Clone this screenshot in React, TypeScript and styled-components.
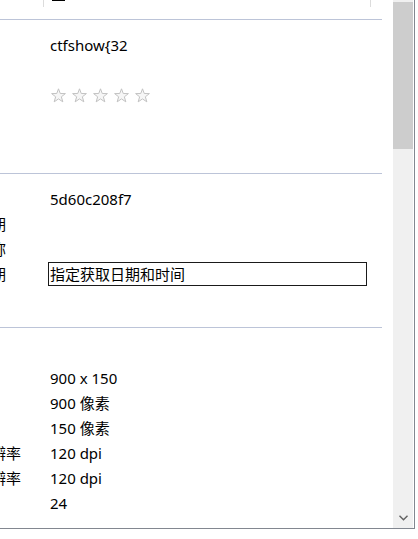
import React from "react";
import styled, { createGlobalStyle } from "styled-components";

const Global = createGlobalStyle`
  html, body { margin: 0; padding: 0; background: #ffffff; overflow: hidden; }
  body { font-family: "Noto Sans", "Noto Sans CJK SC", sans-serif; }
`;

const Page = styled.div`
  width: 418px;
  height: 539px;
  background: #ffffff;
`;

const Frame = styled.div`
  box-sizing: border-box;
  width: 415px;
  height: 529px;
  display: flex;
  padding-right: 1px;
  border-right: 1px solid #828790;
  border-bottom: 1px solid #828790;
`;

const Content = styled.div`
  flex: 1;
  min-width: 0;
  overflow: hidden;
  padding-right: 11px;
  font-size: 15px;
  color: #000000;
`;

const Stub = styled.div`
  height: 19px;
`;

const StubBox = styled.div`
  box-sizing: border-box;
  margin-left: 43px;
  width: 328px;
  height: 7px;
  border-left: 1px solid #dcdcdc;
  border-right: 1px solid #dcdcdc;
  padding-left: 8px;
`;

const StubMark = styled.div`
  width: 13px;
  height: 1px;
  background: #000000;
`;

const Rule = styled.div`
  height: 1px;
  background: #bcc4d8;
`;

const Rows = styled.div<{ $bottom: number }>`
  display: grid;
  grid-template-columns: 104px 1fr;
  grid-auto-rows: 25px;
  margin-left: -54px;
  padding: 13px 0 ${(p) => p.$bottom}px;
`;

const Label = styled.div`
  display: flex;
  align-items: center;
  white-space: nowrap;
  line-height: 1;
`;

const Value = styled.div`
  display: flex;
  align-items: center;
  white-space: nowrap;
  line-height: 1;
`;

const EditValue = styled.div`
  display: flex;
  align-items: flex-start;
`;

const EditBox = styled.div`
  box-sizing: border-box;
  margin-left: -2px;
  width: 319px;
  height: 24px;
  border: 1px solid #1a1a1a;
  padding-left: 1px;
  display: flex;
  align-items: center;
  line-height: 1;
  white-space: nowrap;
`;

const Stars = styled.div`
  display: flex;
  align-items: center;
  gap: 6px;
  padding-left: 1px;
  margin-top: -1px;
`;

const Scrollbar = styled.div`
  width: 20px;
  background: #f0f0f0;
  display: flex;
  flex-direction: column;
  padding-top: 2px;
  box-sizing: border-box;
`;

const Thumb = styled.div`
  height: 147px;
  background: #cdcdcd;
`;

const Track = styled.div`
  flex: 1;
`;

const ArrowButton = styled.div`
  height: 21px;
  display: flex;
  align-items: center;
  justify-content: center;
`;

const Star = () => (
  <svg width="15" height="15" viewBox="0 0 15 15">
    <polygon
      points="7.5,0.8 9.26,5.5 14.4,5.6 10.35,8.8 11.8,13.8 7.5,10.9 3.2,13.8 4.65,8.8 0.6,5.6 5.74,5.5"
      fill="#f6f6f6"
      stroke="#c2c2c2"
      strokeWidth="1"
      strokeLinejoin="miter"
    />
  </svg>
);

type Row = { label: string; value?: string; kind?: "stars" | "edit" };

const sections: { rows: Row[]; bottom: number }[] = [
  {
    bottom: 15,
    rows: [
      { label: "标题", value: "ctfshow{32" },
      { label: "主题" },
      { label: "分级", kind: "stars" },
      { label: "标记" },
      { label: "备注" },
    ],
  },
  {
    bottom: 15,
    rows: [
      { label: "作者", value: "5d60c208f7" },
      { label: "拍摄日期" },
      { label: "程序名称" },
      { label: "获取日期", kind: "edit", value: "指定获取日期和时间" },
      { label: "版权" },
    ],
  },
  {
    bottom: 15,
    rows: [
      { label: "图像 ID" },
      { label: "尺寸", value: "900 x 150" },
      { label: "宽度", value: "900 像素" },
      { label: "高度", value: "150 像素" },
      { label: "水平分辨率", value: "120 dpi" },
      { label: "垂直分辨率", value: "120 dpi" },
      { label: "位深度", value: "24" },
    ],
  },
];

export default function App() {
  return (
    <Page>
      <Global />
      <Frame>
        <Content>
          <Stub>
            <StubBox>
              <StubMark />
            </StubBox>
          </Stub>
          {sections.map((s, i) => (
            <React.Fragment key={i}>
              <Rule />
              <Rows $bottom={s.bottom}>
                {s.rows.map((r, j) => (
                  <React.Fragment key={j}>
                    <Label>{r.label}</Label>
                    {r.kind === "stars" ? (
                      <Stars>
                        {[0, 1, 2, 3, 4].map((k) => (
                          <Star key={k} />
                        ))}
                      </Stars>
                    ) : r.kind === "edit" ? (
                      <EditValue>
                        <EditBox>{r.value}</EditBox>
                      </EditValue>
                    ) : (
                      <Value>{r.value ?? ""}</Value>
                    )}
                  </React.Fragment>
                ))}
              </Rows>
            </React.Fragment>
          ))}
        </Content>
        <Scrollbar>
          <Thumb />
          <Track />
          <ArrowButton>
            <svg width="9" height="6" viewBox="0 0 9 6">
              <path d="M0.5 0.8 L4.5 4.8 L8.5 0.8" fill="none" stroke="#606060" strokeWidth="1.4" />
            </svg>
          </ArrowButton>
        </Scrollbar>
      </Frame>
    </Page>
  );
}
